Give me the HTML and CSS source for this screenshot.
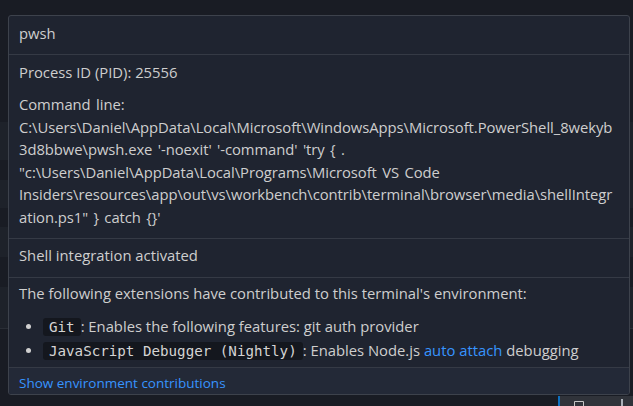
FILE: index.html
```html
<!DOCTYPE html>
<html lang="en">
<head>
<meta charset="utf-8">
<title>Terminal hover</title>
<link rel="stylesheet" href="styles.css">
</head>
<body>
<div class="screen">
  <div class="backdrop">
    <div class="band b-top"></div>
    <div class="band b-light h38"></div>
    <div class="band h20"></div>
    <div class="band b-light h28"></div>
    <div class="band h19"></div>
    <div class="band b-light h30"></div>
    <div class="band h30"></div>
    <div class="band b-light h41"></div>
    <div class="band b-rest"></div>
  </div>

  <div class="panel-corner">
    <svg class="corner-icon" width="12" height="8" viewBox="0 0 12 8"><path d="M1.5 8V1.5h9V8" fill="none" stroke="#c5c5c5" stroke-width="1"/></svg>
    <span class="corner-mark"></span>
  </div>

  <div class="hover">
    <div class="row row-head">
      <p>pwsh</p>
    </div>
    <div class="row row-info">
      <p class="gap">Process ID (PID): 25556</p>
      <p class="cmd">Command line:<br>C:\Users\Daniel\AppData\Local\Microsoft\WindowsApps\Microsoft.PowerShell_8wekyb<br>3d8bbwe\pwsh.exe '-noexit' '-command' 'try { .<br>"c:\Users\Daniel\AppData\Local\Programs\Microsoft VS Code<br>Insiders\resources\app\out\vs\workbench\contrib\terminal\browser\media\shellIntegr<br>ation.ps1" } catch {}'</p>
    </div>
    <div class="row row-shell">
      <p>Shell integration activated</p>
    </div>
    <div class="row row-ext">
      <p class="gap-ext">The following extensions have contributed to this terminal's environment:</p>
      <ul class="ext-list">
        <li><span class="item"><code class="code">Git</code>: Enables the following features: git auth provider</span></li>
        <li><span class="item"><code class="code">JavaScript Debugger (Nightly)</code>: Enables Node.js <a class="link">auto attach</a> debugging</span></li>
      </ul>
    </div>
    <div class="status">
      <a class="link">Show environment contributions</a>
    </div>
  </div>
</div>
</body>
</html>
```

FILE: styles.css
```css
html, body {
  margin: 0;
  padding: 0;
  background: #191c24;
}

.screen {
  position: relative;
  width: 633px;
  height: 406px;
  overflow: hidden;
}

.backdrop {
  display: flex;
  flex-direction: column;
  height: 100%;
}

.band { background: #191c24; flex: none; }
.b-light { background: #1e222a; }
.b-top { height: 122px; }
.h38 { height: 38px; }
.h20 { height: 20px; }
.h28 { height: 28px; }
.h19 { height: 19px; }
.h30 { height: 30px; }
.h41 { height: 41px; }
.b-rest { flex: 1; border-top: 1px solid #2a2e36; }

.panel-corner {
  position: absolute;
  left: 558px;
  top: 396px;
  right: 0;
  bottom: 0;
  background: #30333a;
  border-left: 2px solid #0e70c0;
  display: flex;
  align-items: flex-start;
}

.corner-icon {
  margin: 4px 0 0 13px;
}

.corner-mark {
  width: 2px;
  height: 7px;
  margin: 3px 0 0 36px;
  background: #aab0b8;
}

.hover {
  position: absolute;
  left: 8px;
  top: 15px;
  width: 620px;
  border: 1px solid #3d424c;
  border-radius: 3px;
  background: #1f2430;
  color: #cecece;
  font-family: "Open Sans", "Noto Sans", sans-serif;
  font-size: 14.8px;
  line-height: 22.5px;
  overflow: hidden;
}

.hover p { margin: 0; }

.row {
  padding-left: 10px;
  padding-right: 9px;
}

.row + .row,
.row + .status {
  border-top: 1px solid #353a45;
}

.row-head { padding-top: 6.4px; padding-bottom: 9.1px; }
.row-info { padding-top: 5.8px; padding-bottom: 9.9px; }
.row-shell { padding-top: 4.8px; padding-bottom: 10.7px; }
.row-ext { padding-top: 4.4px; padding-bottom: 5.2px; }

.gap { margin-bottom: 9.8px !important; }
.gap-ext { margin-bottom: 9.2px !important; }

.cmd {
  white-space: nowrap;
  letter-spacing: -0.05px;
  word-spacing: 1.6px;
}

.ext-list {
  list-style: none;
  margin: 0;
  padding: 0;
}

.ext-list li {
  display: flex;
  align-items: center;
  height: 24px;
  line-height: 24px;
}

.ext-list li::before {
  content: "";
  width: 5px;
  height: 5px;
  border-radius: 50%;
  background: #d0d0d0;
  margin-left: 6.5px;
  margin-right: 12.5px;
  flex: none;
}

.item { white-space: nowrap; }

.code {
  font-family: "DejaVu Sans Mono", "Liberation Mono", monospace;
  font-size: 14.2px;
  line-height: 1;
  background: #14171e;
  border-radius: 3px;
  padding: 1px 6px;
  color: #d4d4d4;
}

.link {
  color: #3794ff;
  text-decoration: none;
  cursor: pointer;
}

.status {
  height: 27px;
  box-sizing: border-box;
  padding: 3.6px 10px 0;
  background: #232937;
  font-size: 13.5px;
}
```
